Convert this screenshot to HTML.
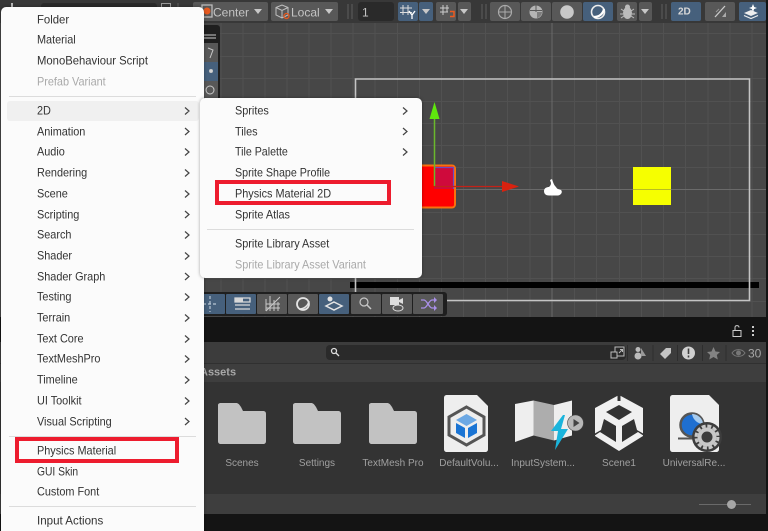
<!DOCTYPE html>
<html><head><meta charset="utf-8">
<style>
html,body{margin:0;padding:0;background:#141414}
#r{position:relative;width:768px;height:531px;overflow:hidden;background:#141414;font-family:"Liberation Sans",sans-serif;filter:blur(.3px)}
#r div{position:absolute}
.b{background:#585858;border-radius:2px;height:19px;top:2px}
.tb{background:#585858;height:20px;top:294px;width:30px;border-radius:1px}
.a{background:#46607c}
.tb.a{background:#46607c}
.t{white-space:nowrap;line-height:14px;height:14px;font-size:11.7px;color:#333;transform:translateY(-6.5px)}
.m{--s:.93;transform-origin:0 50%;transform:translateY(-6.5px) scaleX(var(--s))}
.d{color:#a9a9a9}
.c{font-size:10px;color:#a0a0a0;text-align:center;width:90px;line-height:12px;top:458px}
.tri{width:0;height:0;border-left:4px solid transparent;border-right:4px solid transparent;border-top:5px solid #c8c8c8}
</style></head><body>
<div id="r">
<!-- scene -->
<div style="left:0;top:0;width:766px;height:23px;background:#383838"></div>
<div style="left:0;top:23px;width:766px;height:294px;background:#474747"></div>
<svg style="position:absolute;left:0;top:23px" width="766" height="294" viewBox="0 23 766 294">
<g stroke="#515151" stroke-width="1" fill="none">
<path d="M221 23V317M243 23V317M265 23V317M287 23V317M309 23V317M331 23V317M353 23V317M375 23V317M397.500 23V317M419.500 23V317M441.500 23V317M463.500 23V317M485.500 23V317M507.500 23V317M530 23V317M574.500 23V317M596.500 23V317M619.500 23V317M641.500 23V317M663.500 23V317M685.500 23V317M708 23V317M730 23V317M752 23V317"/>
<path d="M200 33.500H766M200 56.500H766M200 78.500H766M200 101.500H766M200 123.500H766M200 145.500H766M200 167.500H766M200 212.500H766M200 234.500H766M200 256.500H766M200 278.500H766M200 301.500H766"/>
</g>
<path d="M552 23V317M200 189.500H766" stroke="#6a6a6a" stroke-width="1" fill="none"/>
<rect x="350" y="282" width="409" height="6" fill="#000"/>
<path d="M355.500 292V79H749.500V300.500H447" stroke="#c4c4c4" stroke-width="1.600" fill="none"/>
<rect x="400" y="165.500" width="55" height="42" rx="3" fill="#ff0000" stroke="#f9700e" stroke-width="2"/>
<rect x="434" y="168" width="19" height="21" fill="#cf0a3c"/>
<path d="M434 167.500H453.500V189" stroke="#6a4cc0" stroke-width="1.200" fill="none"/>
<rect x="633" y="167" width="38" height="38" fill="#f6ff00"/>
<path d="M633 189.500H671" stroke="#b9bd20" stroke-width="1"/>
<path d="M434.500 186V115" stroke="#6ab82c" stroke-width="1.500"/>
<path d="M434.500 102L429.500 119H439.500Z" fill="#5fe80d"/>
<path d="M434 186.500H504" stroke="#c32218" stroke-width="1.300"/>
<path d="M502 181L519 186.500L502 192Z" fill="#d9220f"/>
<path d="M544 191C544 188 547 187 549 187C550 186 551 185 551 183L550 180L552 179L553 182C554 185 555 186 556 187C557 189 558 189 561 190C563 192 561 195 558 195.500H549C546 195.500 544 194 544 191Z" fill="#fff"/>
</svg>
<!-- top-left toolbar remnants -->
<div style="left:41px;top:3px;width:116px;height:9px;background:#2a2a2a;border-radius:3px"></div>
<div style="left:161px;top:3px;width:10px;height:9px;border:1px solid #999;box-sizing:border-box"></div>
<div style="left:11px;top:3px;width:2px;height:5px;background:#bbb"></div>
<div style="left:177px;top:3px;width:2px;height:17px;background:#4b4b4b"></div>
<!-- top toolbar -->
<div class="b" style="left:193px;width:75px"></div>
<svg style="position:absolute;left:200px;top:3px" width="16" height="17"><rect x="2" y="2" width="10" height="12" fill="none" stroke="#bbb" stroke-width="1.300"/><circle cx="7" cy="8" r="3.500" fill="#e65a20"/></svg>
<div class="t" style="left:213px;top:12px;color:#c4c4c4;font-size:12px">Center</div>
<div class="tri" style="left:254px;top:9px"></div>
<div class="b" style="left:271px;width:67px"></div>
<svg style="position:absolute;left:274px;top:3px" width="17" height="17"><path d="M2 4.500L8 2L14 4.500V12L8 15L2 12ZM2 4.500L8 7.500L14 4.500M8 7.500V15" fill="none" stroke="#c0c0c0"/><circle cx="12.500" cy="13" r="2.500" fill="none" stroke="#e6581e" stroke-width="1.300"/></svg>
<div class="t" style="left:291px;top:12px;color:#c4c4c4;font-size:12px">Local</div>
<div class="tri" style="left:325px;top:9px"></div>
<div style="left:347px;top:4px;width:2px;height:15px;background:#4b4b4b"></div><div style="left:351px;top:4px;width:2px;height:15px;background:#4b4b4b"></div>
<div style="left:358px;top:2px;width:36px;height:19px;background:#2a2a2a;border-radius:3px"></div>
<div class="t" style="left:362px;top:12px;color:#c4c4c4;font-size:12px">1</div>
<div class="b a" style="left:398px;width:20px"></div><div class="b a" style="left:419px;width:14px"></div>
<div class="tri" style="left:422px;top:9px"></div>
<svg style="position:absolute;left:400px;top:4px" width="17" height="15"><path d="M3 1V11M8 1V11M0 4H12M0 8.500H12" stroke="#ddd" fill="none"/><path d="M9 7L12 11L15 7M12 11V15" stroke="#fff" stroke-width="1.300" fill="none"/></svg>
<div class="b" style="left:436px;width:20px"></div><div class="b" style="left:458px;width:13px"></div>
<div class="tri" style="left:460px;top:9px"></div>
<svg style="position:absolute;left:440px;top:4px" width="16" height="15"><path d="M3 1V11M7 1V8M0 4H9M0 8H8" stroke="#ccc" fill="none"/><path d="M10 7.500H14V12.500H10" stroke="#ee5a1f" stroke-width="1.500" fill="none"/></svg>
<div style="left:481px;top:4px;width:2px;height:15px;background:#4b4b4b"></div><div style="left:485px;top:4px;width:2px;height:15px;background:#4b4b4b"></div>
<div class="b" style="left:490px;width:30px"></div><div class="b" style="left:521px;width:30px"></div><div class="b" style="left:552px;width:30px"></div><div class="b a" style="left:583px;width:30px"></div>
<svg style="position:absolute;left:490px;top:2px" width="123" height="19">
<circle cx="15" cy="10" r="6.500" fill="none" stroke="#aaa" stroke-width="1.200"/><path d="M8.500 10H21.500M15 3.500V16.500" stroke="#aaa"/>
<circle cx="46" cy="10" r="6.500" fill="#b4b4b4"/><path d="M40 8.500H52M46 3.500V10" stroke="#585858"/><path d="M47 10H52C52 13 49 16 47 16Z" fill="#7d7d7d"/>
<circle cx="77" cy="10" r="6.800" fill="#c8c8c8"/>
<circle cx="108" cy="10" r="6.500" fill="none" stroke="#eee" stroke-width="1.600"/><path d="M104 15C109 15 113 12 114 7" stroke="#fff" stroke-width="2.200" fill="none"/></svg>
<div class="b" style="left:617px;width:20px"></div><div class="b" style="left:639px;width:13px"></div>
<div class="tri" style="left:641px;top:9px"></div>
<svg style="position:absolute;left:620px;top:3px" width="15" height="17"><ellipse cx="7.500" cy="10" rx="4.500" ry="6" fill="#bbb"/><circle cx="7.500" cy="4" r="2.500" fill="#bbb"/><path d="M1 6L4 8M14 6L11 8M0 11H3M15 11H12M1 15L4 13M14 15L11 13" stroke="#bbb"/></svg>
<div style="left:661px;top:4px;width:2px;height:15px;background:#4b4b4b"></div><div style="left:665px;top:4px;width:2px;height:15px;background:#4b4b4b"></div>
<div class="b a" style="left:671px;width:30px"></div>
<div class="t" style="left:678px;top:12px;color:#d8d8d8;font-size:10px;font-weight:bold">2D</div>
<div class="b" style="left:705px;width:30px"></div>
<svg style="position:absolute;left:714px;top:4px" width="14" height="15"><path d="M1 13L11 2" stroke="#ccc" stroke-width="1.300"/><path d="M8 13L12 8V13Z" fill="#aaa"/><path d="M2 8L5 5" stroke="#999"/></svg>
<div class="b a" style="left:739px;width:27px"></div>
<svg style="position:absolute;left:742px;top:4px" width="24" height="15"><path d="M2 9L9 6L16 9L9 12Z" fill="#eee"/><path d="M2 11.500L9 14.500L16 11.500" stroke="#eee" fill="none" stroke-width="1.200"/><path d="M11 0L12.200 3L15 4L12.200 5L11 8L9.800 5L7 4L9.800 3Z" fill="#fff"/></svg>
<!-- left vertical tool strip remnants -->
<div style="left:195px;top:25px;width:25px;height:75px;background:#1f1f1f;border-radius:3px"></div>
<div style="left:203px;top:43px;width:15px;height:19px;background:#585858"></div>
<div style="left:203px;top:62px;width:15px;height:19px;background:#46607c"></div>
<div style="left:203px;top:81px;width:15px;height:19px;background:#585858"></div>
<svg style="position:absolute;left:203px;top:30px" width="15" height="70" fill="none" stroke="#c8c8c8"><path d="M1 5H13M1 8H13"/><path d="M5 18L10 20L7 28"/><circle cx="8" cy="41" r="1.500" fill="#d8d8d8"/><circle cx="7" cy="60" r="4"/></svg>
<!-- scene overlay toolbar -->
<div style="left:196px;top:292px;width:251px;height:24px;background:#1f1f1f;border-radius:3px"></div>
<div class="tb a" style="left:200px;width:25px"></div>
<div class="tb a" style="left:226px;width:30px"></div>
<div class="tb" style="left:257px"></div>
<div class="tb" style="left:288px"></div>
<div class="tb a" style="left:319px"></div>
<div class="tb" style="left:351px"></div>
<div class="tb" style="left:382px"></div>
<div class="tb" style="left:413px"></div>
<svg style="position:absolute;left:200px;top:294px" width="245" height="20">
<path d="M10 2V18M3 10H17" stroke="#b8c6d4" stroke-width="1.200" stroke-dasharray="3 2"/>
<path d="M35 4H50V8H35ZM35 11H50M35 15H50" stroke="#d8d8d8" fill="none" stroke-width="1.300"/><rect x="35" y="4" width="8" height="4" fill="#d8d8d8"/>
<path d="M66 5V17M70 2V17M74 6V17M78 8V17M66 10H80M66 14H80M66 17L80 3" stroke="#c8c8c8" fill="none"/>
<circle cx="103" cy="10" r="6" fill="none" stroke="#e4e4e4" stroke-width="1.800"/><path d="M99 15C104 15 108 12 109 7" stroke="#e4e4e4" stroke-width="1.500" fill="none"/>
<circle cx="130" cy="5" r="2.500" fill="#e4e4e4"/><path d="M134 8L142 12L134 16L126 12Z" fill="none" stroke="#e4e4e4" stroke-width="1.500"/>
<circle cx="164" cy="8" r="4" fill="none" stroke="#c8c8c8" stroke-width="1.200"/><path d="M167 11L171 15" stroke="#c8c8c8" stroke-width="1.500"/>
<rect x="190" y="3" width="9" height="8" fill="#ddd"/><path d="M199 6L203 4V10L199 8Z" fill="#ddd"/><ellipse cx="198" cy="14" rx="5" ry="3" fill="none" stroke="#ddd"/>
<path d="M221 6H224C227 6 229 14 232 14H235M221 14H224C227 14 229 6 232 6H235" stroke="#a98fe8" stroke-width="1.300" fill="none"/><path d="M234 3V9L237 6ZM234 11V17L237 14Z" fill="#a98fe8"/>
</svg>
<!-- project panel -->
<div style="left:0;top:342px;width:766px;height:21px;background:#3c3c3c"></div>
<div style="left:0;top:363px;width:766px;height:19px;background:#3e3e3e;border-top:1px solid #303030;box-sizing:border-box"></div>
<div style="left:0;top:382px;width:766px;height:112px;background:#333"></div>
<div style="left:0;top:494px;width:766px;height:20px;background:#3e3e3e"></div>
<div style="left:326px;top:345px;width:300px;height:15px;background:#2a2a2a;border-radius:4px"></div>
<svg style="position:absolute;left:330px;top:347px" width="10" height="10"><circle cx="4" cy="4" r="2.500" fill="none" stroke="#ddd" stroke-width="1.300"/><path d="M6 6L9 9" stroke="#ddd" stroke-width="1.300"/></svg>
<svg style="position:absolute;left:610px;top:345px" width="156" height="16">
<rect x="5" y="2" width="9" height="9" fill="none" stroke="#bbb"/><rect x="1" y="7" width="6" height="6" fill="#2a2a2a" stroke="#bbb"/><path d="M9 8L12 5M10 4.500H12.500V7" stroke="#bbb" fill="none"/>
<path d="M17.500 0V16M43 0V16M67.500 0V16M92.500 0V16M116 0V16" stroke="#2e2e2e"/>
<circle cx="28" cy="11" r="3.500" fill="#bbb"/><circle cx="28" cy="4.500" r="2.500" fill="#bbb"/><path d="M31 3L36 11H31Z" fill="#999"/>
<path d="M50 9L56 3H61V8L55 14Z" fill="#c4c4c4"/>
<circle cx="78.500" cy="8" r="6.500" fill="#d0d0d0"/><path d="M78.500 3.500V9M78.500 10.500V12.500" stroke="#3c3c3c" stroke-width="1.600"/>
<path d="M103.500 2L105.500 6.500L110 7L106.800 10L107.800 14.500L103.500 12L99.200 14.500L100.200 10L97 7L101.500 6.500Z" fill="#838383"/>
<path d="M122 8C125 3.500 132 3.500 135 8C132 12.500 125 12.500 122 8Z" fill="none" stroke="#777"/><circle cx="128.500" cy="8" r="2.500" fill="#777"/>
</svg>
<div class="t" style="left:748px;top:353px;font-size:12px;color:#a6a6a6">30</div>
<svg style="position:absolute;left:732px;top:324px" width="26" height="14"><rect x="1" y="6.500" width="8" height="6" fill="none" stroke="#ccc"/><path d="M3 6V3.500C3 1 7 1 7 3.500" fill="none" stroke="#ccc"/><path d="M21 2V4M21 6V8M21 10V12" stroke="#ccc" stroke-width="2"/></svg>
<div class="t" style="left:200px;top:372px;font-size:11px;font-weight:bold;color:#a8a8a8">Assets</div>
<svg style="position:absolute;left:0;top:0" width="768" height="531" viewBox="0 0 768 531">
<g fill="#c2c2c2">
<path d="M218 405C218 404 219 403 221 403H236C238 403 239 404 241 407L243 411H263C265 411 266 412 266 414V441C266 443 265 444 263 444H221C219 444 218 443 218 441Z"/>
<path d="M293 405C293 404 294 403 296 403H311C313 403 314 404 316 407L318 411H338C340 411 341 412 341 414V441C341 443 340 444 338 444H296C294 444 293 443 293 441Z"/>
<path d="M369 405C369 404 370 403 372 403H387C389 403 390 404 392 407L394 411H414C416 411 417 412 417 414V441C417 443 416 444 414 444H372C370 444 369 443 369 441Z"/>
</g>
<!-- DefaultVolume -->
<path d="M447 395C445 395 444 396 444 398V449C444 451 445 452 447 452H485C487 452 488 451 488 449V406L477 395Z" fill="#eee"/>
<path d="M466.500 407L484 417V435L466.500 445L449 435V417Z" fill="none" stroke="#555" stroke-width="3"/>
<path d="M466.500 414L477 420L466.500 426L456 420Z" fill="#6ca8e4"/>
<path d="M456 423L465 428V438L456 433ZM477 423L468 428V438L477 433Z" fill="#1a74d4"/>
<!-- InputSystem map -->
<path d="M515 404L533.500 400.500V435.500L515 442Z" fill="#eee"/>
<path d="M533.500 400.500L554 405V440.500L533.500 435.500Z" fill="#adadad"/>
<path d="M554 405L572 400.500V435.500L554 440.500Z" fill="#eee"/>
<path d="M563 415L551 431H558L555 450L568 429H561L565 415Z" fill="#1ab4dc"/>
<circle cx="575.500" cy="423" r="8" fill="#b8b8b8" stroke="#444" stroke-width=".6"/><path d="M573.500 419V427L579.500 423Z" fill="#444"/>
<!-- Unity -->
<path d="M619 395L643 408V436L619 451L595 436V408Z" fill="#f0f0f0"/>
<path d="M619 405L632 412L619 420L606 412Z" fill="#333"/>
<path d="M619 394V401" stroke="#333" stroke-width="3"/>
<path d="M604 419L616 426V442L600 432L594 436V434L601 430Z" fill="#333"/>
<path d="M634 419L622 426V442L638 432L644 436V434L637 430Z" fill="#333"/>
<!-- Universal -->
<path d="M673 395C671 395 670 396 670 398V449C670 451 671 452 673 452H716C718 452 719 451 719 449V405L709 395Z" fill="#eee"/>
<circle cx="692" cy="425" r="11.500" fill="#1f6fd0" stroke="#555" stroke-width="2.500"/>
<path d="M692 414C698 414 703 419 703 424C698 424 693 420 692 414Z" fill="#a6cbee"/>
<path d="M678 438.500H695" stroke="#555" stroke-width="2"/>
<circle cx="707" cy="437" r="15" fill="#3d3d3d"/>
<circle cx="707" cy="437" r="7.500" fill="none" stroke="#c8c8c8" stroke-width="4"/>
<circle cx="707" cy="437" r="11" fill="none" stroke="#c8c8c8" stroke-width="3" stroke-dasharray="4 1.760"/>
</svg>
<div class="c" style="left:197px">Scenes</div>
<div class="c" style="left:272px">Settings</div>
<div class="c" style="left:348px">TextMesh Pro</div>
<div class="c" style="left:424px">DefaultVolu...</div>
<div class="c" style="left:498px">InputSystem...</div>
<div class="c" style="left:574px">Scene1</div>
<div class="c" style="left:649px">UniversalRe...</div>
<div style="left:699px;top:504px;width:52px;height:1px;background:#6a6a6a"></div>
<div style="left:727px;top:500px;width:9px;height:9px;border-radius:50%;background:#a6a6a6"></div>
<!-- menus -->
<div style="left:1px;top:7px;width:203px;height:530px;background:#fbfbfb;border-radius:5px 5px 0 0;box-shadow:0 0 3px rgba(0,0,0,.35)"></div>
<div style="left:7px;top:101px;width:192px;height:20px;background:#f0f0f0;border-radius:3px"></div>
<div style="left:9px;top:96px;width:187px;height:1px;background:#dcdcdc"></div>
<div style="left:9px;top:436px;width:187px;height:1px;background:#dcdcdc"></div>
<div style="left:9px;top:506px;width:187px;height:1px;background:#dcdcdc"></div>
<div class="t m" style="left:37px;top:19.500px;--s:.97">Folder</div>
<div class="t m" style="left:37px;top:40px">Material</div>
<div class="t m" style="left:37px;top:61px;--s:.965">MonoBehaviour Script</div>
<div class="t m d" style="left:37px;top:81.500px">Prefab Variant</div>
<div class="t m" style="left:37px;top:111px">2D</div>
<div class="t m" style="left:37px;top:131.500px">Animation</div>
<div class="t m" style="left:37px;top:152px">Audio</div>
<div class="t m" style="left:37px;top:173px">Rendering</div>
<div class="t m" style="left:37px;top:194px">Scene</div>
<div class="t m" style="left:37px;top:214.500px">Scripting</div>
<div class="t m" style="left:37px;top:235px">Search</div>
<div class="t m" style="left:37px;top:256px">Shader</div>
<div class="t m" style="left:37px;top:276.500px">Shader Graph</div>
<div class="t m" style="left:37px;top:297px">Testing</div>
<div class="t m" style="left:37px;top:318px">Terrain</div>
<div class="t m" style="left:37px;top:339px">Text Core</div>
<div class="t m" style="left:37px;top:359px">TextMeshPro</div>
<div class="t m" style="left:37px;top:380px">Timeline</div>
<div class="t m" style="left:37px;top:401px">UI Toolkit</div>
<div class="t m" style="left:37px;top:421.500px">Visual Scripting</div>
<div class="t m" style="left:37px;top:451px">Physics Material</div>
<div class="t m" style="left:37px;top:471.500px;--s:.88">GUI Skin</div>
<div class="t m" style="left:37px;top:492px">Custom Font</div>
<div class="t m" style="left:37px;top:521px;--s:.99">Input Actions</div>
<svg style="position:absolute;left:183px;top:100px" width="10" height="330" fill="none" stroke="#444" stroke-width="1.200">
<path d="M2 7.500L6 11L2 14.500M2 28L6 31.500L2 35M2 48.500L6 52L2 55.500M2 69.500L6 73L2 76.500M2 90.500L6 94L2 97.500M2 111L6 114.500L2 118M2 131.500L6 135L2 138.500M2 152.500L6 156L2 159.500M2 173L6 176.500L2 180M2 193.500L6 197L2 200.500M2 214.500L6 218L2 221.500M2 235.500L6 239L2 242.500M2 255.500L6 259L2 262.500M2 276.500L6 280L2 283.500M2 297.500L6 301L2 304.500M2 318L6 321.500L2 325"/></svg>
<div style="left:200px;top:98px;width:222px;height:180px;background:#fbfbfb;border-radius:5px;box-shadow:0 0 3px rgba(0,0,0,.35)"></div>
<div style="left:207px;top:229px;width:207px;height:1px;background:#dcdcdc"></div>
<div class="t m" style="left:235px;top:111px">Sprites</div>
<div class="t m" style="left:235px;top:131.500px">Tiles</div>
<div class="t m" style="left:235px;top:152px;--s:.91">Tile Palette</div>
<div class="t m" style="left:235px;top:173px;--s:.915">Sprite Shape Profile</div>
<div class="t m" style="left:235px;top:194px">Physics Material 2D</div>
<div class="t m" style="left:235px;top:214.500px">Sprite Atlas</div>
<div class="t m" style="left:235px;top:243.500px">Sprite Library Asset</div>
<div class="t m d" style="left:235px;top:264.500px">Sprite Library Asset Variant</div>
<svg style="position:absolute;left:401px;top:100px" width="10" height="60" fill="none" stroke="#444" stroke-width="1.200"><path d="M2 7.500L6 11L2 14.500M2 28L6 31.500L2 35M2 48.500L6 52L2 55.500"/></svg>
<!-- red highlights -->
<div style="left:215px;top:180px;width:176px;height:25px;border:4px solid #ed1c2e;box-sizing:border-box"></div>
<div style="left:15px;top:437px;width:164px;height:26px;border:4px solid #ed1c2e;box-sizing:border-box"></div>
</div>
</body></html>
